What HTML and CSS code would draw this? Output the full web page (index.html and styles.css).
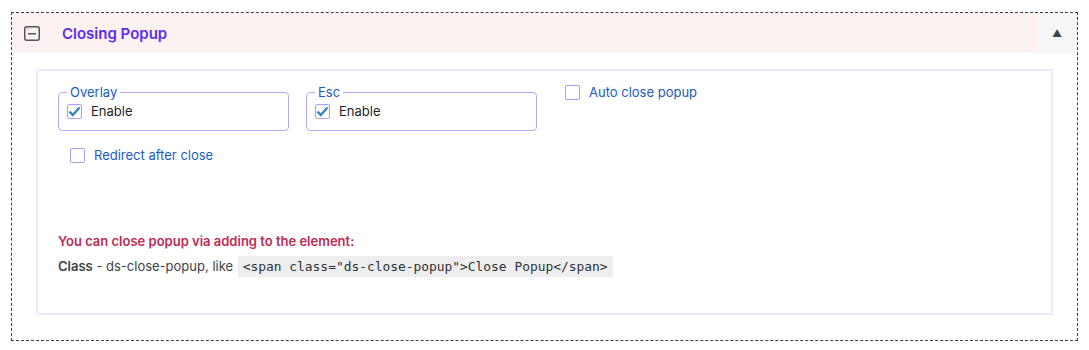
FILE: index.html
```html
<!DOCTYPE html>
<html lang="en">
<head>
    <meta charset="UTF-8">
    <title>Closing Popup</title>
    <link rel="stylesheet" href="styles.css">
</head>
<body>
    <div class="panel">
        <div class="panel-head">
            <span class="head-icon">
                <svg width="16" height="15" viewBox="0 0 16 15"><rect x="0.75" y="0.75" width="14.5" height="13.5" rx="2" fill="none" stroke="#50575e" stroke-width="1.5"/><rect x="4" y="7" width="8" height="1.5" fill="#50575e"/><rect x="2.5" y="2.5" width="1" height="1" fill="#8c8f94"/><rect x="4.5" y="2.5" width="1" height="1" fill="#8c8f94"/></svg>
            </span>
            <h3 class="panel-title">Closing Popup</h3>
            <span class="toggle">&#9650;</span>
        </div>
        <div class="panel-body">
            <div class="box">
                <div class="row">
                    <fieldset class="group">
                        <legend>Overlay</legend>
                        <label class="check"><span class="cb on"><svg width="13" height="11" viewBox="0 0 13 11"><path d="M1.5 5.5 L4.8 9 L11.5 1.5" fill="none" stroke="#3582c4" stroke-width="2.4"/></svg></span>Enable</label>
                    </fieldset>
                    <fieldset class="group">
                        <legend>Esc</legend>
                        <label class="check"><span class="cb on"><svg width="13" height="11" viewBox="0 0 13 11"><path d="M1.5 5.5 L4.8 9 L11.5 1.5" fill="none" stroke="#3582c4" stroke-width="2.4"/></svg></span>Enable</label>
                    </fieldset>
                    <label class="option"><span class="cb"></span>Auto close popup</label>
                </div>
                <div class="row2">
                    <label class="option"><span class="cb"></span>Redirect after close</label>
                </div>
                <p class="note">You can close popup via adding to the element:</p>
                <p class="hint"><b>Class</b> - ds-close-popup, like <code>&lt;span class="ds-close-popup"&gt;Close Popup&lt;/span&gt;</code></p>
            </div>
        </div>
    </div>
</body>
</html>
```

FILE: styles.css
```css
body { margin: 0; padding: 12px 11px 0 11px; font-family: Inter, "Noto Sans", sans-serif; font-size: 13px; color: #1d2327; background: #fff; }
.panel { border: 1px dashed #3f3c52; }
.panel-head { display: flex; align-items: center; height: 40px; background: #fcf2f1; }
.head-icon { display: flex; width: 16px; margin-left: 12px; }
.panel-title { flex: 1; margin: 0 0 0 22px; font-size: 15px; font-weight: 600; color: #5a2cf2; }
.toggle { width: 40px; height: 40px; display: flex; align-items: center; justify-content: center; background: #f6f6f6; color: #3c434a; font-size: 10px; }
.panel-body { padding: 16px 24px 25px 24px; }
.box { border: 2px solid #eee9fd; border-radius: 2px; padding: 13px 20px 39px 20px; }
.row { display: flex; align-items: flex-start; }
.group { width: 231px; box-sizing: border-box; margin: 0 17px 0 0; padding: 3px 8px 11px 8px; border: 1px solid #b8a9f6; border-radius: 4px; }
.group legend { padding: 0 3px; color: #1a5cc4; font-size: 13px; }
.check { display: flex; align-items: center; gap: 9px; }
.cb { display: inline-flex; align-items: center; justify-content: center; width: 15px; height: 15px; box-sizing: border-box; border: 1px solid #a99cf5; border-radius: 2px; background: #fff; }
.option { display: flex; align-items: center; gap: 9px; color: #1a5cc4; }
.row > .option { margin: 0 0 0 11px; }
.row2 { margin: 16px 0 0 12px; }
.note { margin: 70px 0 0 0; color: #c02a53; font-weight: 600; }
.hint { margin: 9px 0 0 0; color: #3c434a; }
.hint b { font-weight: 600; }
.hint code { font-family: "DejaVu Sans Mono", monospace; font-size: 12.9px; background: #eeeeee; padding: 3px 5px; margin-left: 1px; color: #2c3338; }
```
